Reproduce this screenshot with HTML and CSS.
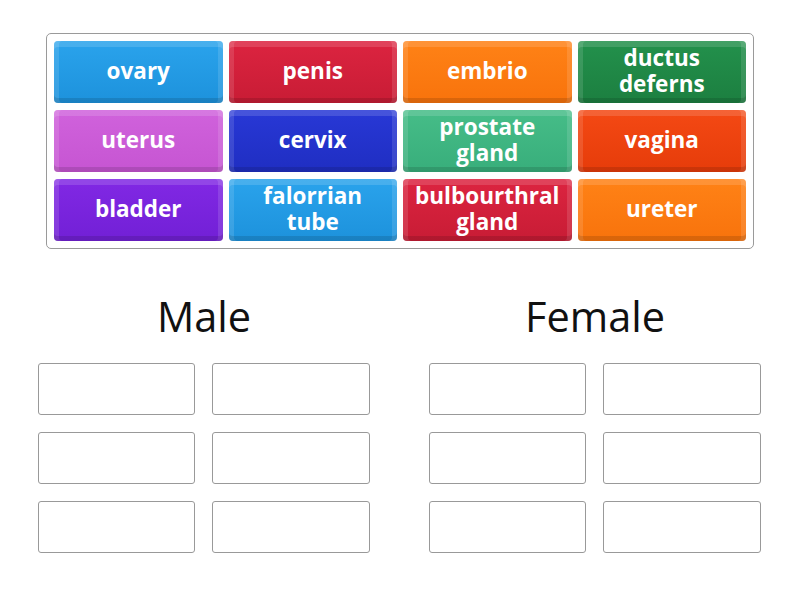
FILE: index.html
```html
<!DOCTYPE html>
<html>
<head>
<meta charset="utf-8">
<link rel="stylesheet" href="styles.css">
</head>
<body>
<div class="page">
  <div class="pool">
    <div class="tile blue">ovary</div>
    <div class="tile red">penis</div>
    <div class="tile orange">embrio</div>
    <div class="tile green">ductus<br>deferns</div>
    <div class="tile pink">uterus</div>
    <div class="tile navy">cervix</div>
    <div class="tile mint">prostate<br>gland</div>
    <div class="tile vermilion">vagina</div>
    <div class="tile purple">bladder</div>
    <div class="tile blue">falorrian<br>tube</div>
    <div class="tile red">bulbourthral<br>gland</div>
    <div class="tile orange">ureter</div>
  </div>
  <div class="groups">
    <div class="group">
      <h2 class="title">Male</h2>
      <div class="slots">
        <div class="slot"></div><div class="slot"></div>
        <div class="slot"></div><div class="slot"></div>
        <div class="slot"></div><div class="slot"></div>
      </div>
    </div>
    <div class="group">
      <h2 class="title">Female</h2>
      <div class="slots">
        <div class="slot"></div><div class="slot"></div>
        <div class="slot"></div><div class="slot"></div>
        <div class="slot"></div><div class="slot"></div>
      </div>
    </div>
  </div>
</div>
</body>
</html>
```
FILE: styles.css
```css
* { box-sizing: border-box; }
html, body { margin: 0; padding: 0; background: #fff; }
body { font-family: "Open Sans", "Liberation Sans", sans-serif; width: 800px; height: 600px; overflow: hidden; }
.page { padding-top: 33px; }
.pool {
  margin: 0 46px 0 46px;
  width: 708px;
  height: 216px;
  border: 1px solid #9a9a9a;
  border-radius: 5px;
  padding: 7px;
  display: grid;
  grid-template-columns: repeat(4, 1fr);
  grid-template-rows: repeat(3, 62px);
  column-gap: 6px;
  row-gap: 7px;
}
.tile {
  border-radius: 4px;
  color: #fff;
  font-weight: 700;
  font-size: 22.5px;
  line-height: 26px;
  display: flex;
  align-items: center;
  justify-content: center;
  text-align: center;
  white-space: nowrap;
  padding-bottom: 2px;
  box-shadow:
    inset 0 -5px 0 rgba(0,0,0,0.12),
    inset 0 6px 0 rgba(255,255,255,0.14),
    inset 5px 0 0 rgba(255,255,255,0.12),
    inset -5px 0 0 rgba(255,255,255,0.12);
}
.blue { background: linear-gradient(#2aa3ec, #1d92dc); }
.red { background: linear-gradient(#dc2440, #c81c35); }
.orange { background: linear-gradient(#ff8216, #f8730c); }
.green { background: linear-gradient(#23914c, #1c7f40); }
.pink { background: linear-gradient(#d062dc, #c655d2); }
.navy { background: linear-gradient(#2838d6, #1f2ec2); }
.mint { background: linear-gradient(#46bd88, #38ae7b); }
.vermilion { background: linear-gradient(#f44914, #e63c0a); }
.purple { background: linear-gradient(#8128e4, #7220d6); }

.groups {
  display: flex;
  margin-top: 39px;
  padding-left: 38px;
  gap: 59px;
}
.group { width: 332px; }
.title {
  margin: 0;
  font-weight: 400;
  font-size: 41.5px;
  line-height: 56px;
  text-align: center;
  color: #111;
}
.slots {
  margin-top: 19px;
  display: grid;
  grid-template-columns: 157px 158px;
  column-gap: 17px;
  row-gap: 17px;
  grid-auto-rows: 52px;
}
.slot {
  border: 1px solid #999;
  border-radius: 3px;
  background: #fff;
}
```
